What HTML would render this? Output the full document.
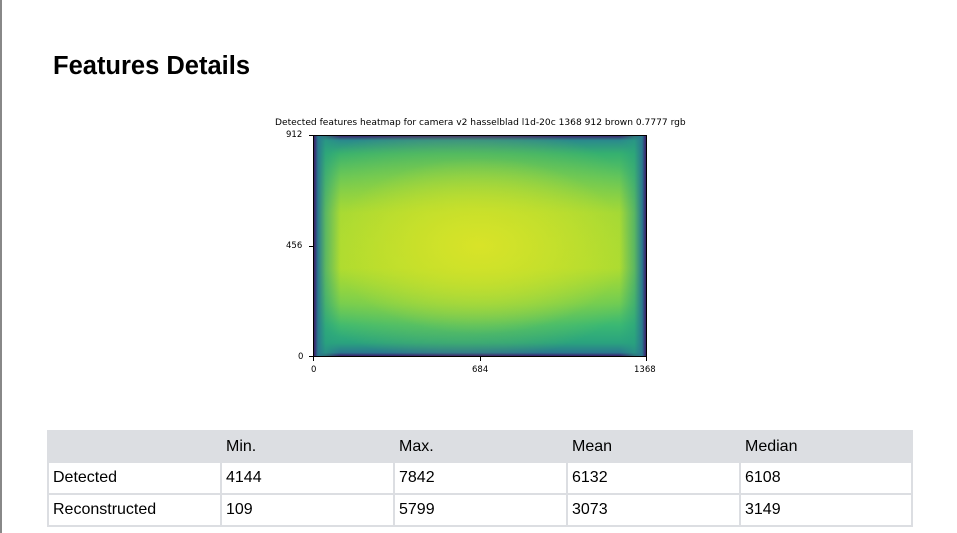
<!DOCTYPE html>
<html><head><style>
body{margin:0;width:957px;height:533px;background:#fff;font-family:"Liberation Sans",Arial,sans-serif;position:relative;overflow:hidden}
.lb{position:absolute;left:0;top:0;width:2px;height:533px;background:#888}
h1{position:absolute;left:53px;top:52px;margin:0;font-size:25.5px;font-weight:bold;color:#000}
.t{position:absolute;font-family:"DejaVu Sans",sans-serif;font-size:9px;color:#000;white-space:nowrap}
.plot{position:absolute;left:313px;top:135px;width:334px;height:222px;border:1px solid #000;box-sizing:border-box;overflow:hidden;background:#3a0f5f}
.in{position:absolute;inset:0;
background:
radial-gradient(ellipse 45% 40% at 50% 50%, rgba(220,228,40,0.9), rgba(220,228,40,0) 100%),
radial-gradient(ellipse 60% 55% at 45% 48%, rgba(190,222,40,0.8), rgba(190,222,40,0) 100%),
linear-gradient(to bottom, #3b2a6e 0%, #2a8a8c 2%, #35b070 8%, #5cc35e 18%, #a0d838 35%, #a8db33 60%, #6ccb55 76%, #3ab873 86%, #2aa37e 94%, #2a788e 98.5%, #3b1f6a 100%);
}
.ed{position:absolute;inset:0;background:linear-gradient(to right,#3b1e6a 0%,#2a798e 1.2%,rgba(40,160,127,0.6) 3.5%,rgba(0,0,0,0) 8%,rgba(0,0,0,0) 92%,rgba(40,160,127,0.6) 96.5%,#2a798e 98.8%,#3b1e6a 100%)}
.tk{position:absolute;background:#000}
table{position:absolute;left:47px;top:430px;width:866px;border-collapse:collapse;font-size:16px;table-layout:fixed}
td{border:2px solid #dcdee2;height:30px;padding:0 4px;color:#000}
tr.h td{background:#dcdee2;height:29px}
</style></head><body>
<div class="lb"></div>
<h1>Features Details</h1>
<div class="t" style="left:275px;top:118px;font-size:9.1px">Detected features heatmap for camera v2 hasselblad l1d-20c 1368 912 brown 0.7777 rgb</div>
<div class="plot"><div class="in"></div><div class="ed"></div></div>
<div class="t" style="left:286px;top:130px;font-size:8.5px">912</div>
<div class="t" style="left:286px;top:241px;font-size:8.5px">456</div>
<div class="t" style="left:298px;top:352px;font-size:8.5px">0</div>
<div class="tk" style="left:309px;top:135px;width:4px;height:1px"></div>
<div class="tk" style="left:309px;top:246px;width:4px;height:1px"></div>
<div class="tk" style="left:309px;top:356px;width:4px;height:1px"></div>
<div class="tk" style="left:313px;top:357px;width:1px;height:4px"></div>
<div class="tk" style="left:480px;top:357px;width:1px;height:4px"></div>
<div class="tk" style="left:646px;top:357px;width:1px;height:4px"></div>
<div class="t" style="left:311px;top:365px;font-size:8.5px">0</div>
<div class="t" style="left:472px;top:365px;font-size:8.5px">684</div>
<div class="t" style="left:634px;top:365px;font-size:8.5px">1368</div>
<table>
<tr class="h"><td style="width:163px"></td><td style="width:163px">Min.</td><td style="width:163px">Max.</td><td style="width:163px">Mean</td><td>Median</td></tr>
<tr><td>Detected</td><td>4144</td><td>7842</td><td>6132</td><td>6108</td></tr>
<tr><td>Reconstructed</td><td>109</td><td>5799</td><td>3073</td><td>3149</td></tr>
</table>
</body></html>
